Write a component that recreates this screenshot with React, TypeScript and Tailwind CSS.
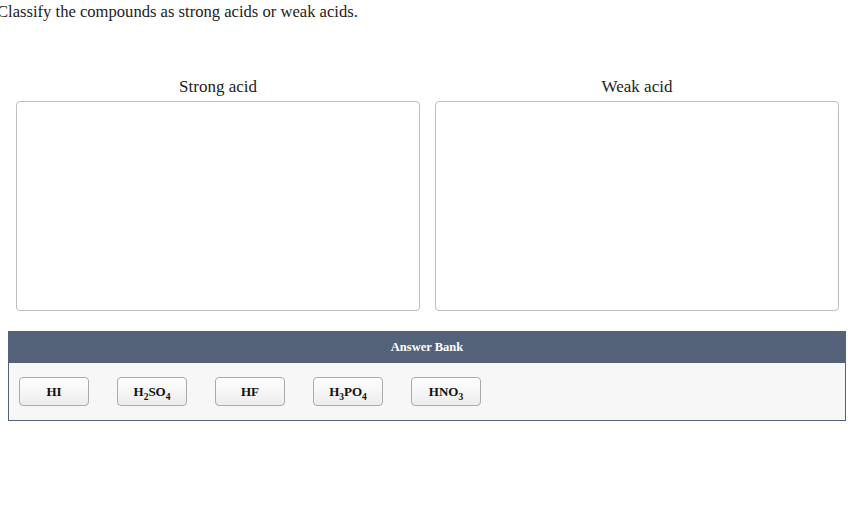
import type { ReactNode } from "react";

const sub = "text-[9.5px] align-[-2px]";

const items: ReactNode[] = [
  <>HI</>,
  <>
    H<sub className={sub}>2</sub>SO<sub className={sub}>4</sub>
  </>,
  <>HF</>,
  <>
    H<sub className={sub}>3</sub>PO<sub className={sub}>4</sub>
  </>,
  <>
    HNO<sub className={sub}>3</sub>
  </>,
];

function Bin({ label }: { label: string }) {
  return (
    <div className="flex w-[404px] flex-col">
      <div className="h-[24px] text-center text-[17px] leading-[20px] text-[#222]">{label}</div>
      <div className="h-[210px] rounded-[4px] border border-[#bdbdbd] bg-white" />
    </div>
  );
}

export default function App() {
  return (
    <div className="h-[517px] w-[848px] overflow-hidden bg-white font-['Liberation_Serif',serif] text-[#222]">
      <p className="-ml-[3px] pt-[2px] text-[16.6px] leading-[20px]">
        Classify the compounds as strong acids or weak acids.
      </p>
      <div className="mt-[55px] flex gap-[15px] pl-[16px]">
        <Bin label="Strong acid" />
        <Bin label="Weak acid" />
      </div>
      <div className="ml-[8px] mt-[20px] w-[838px] border border-[#536278]">
        <div className="flex h-[31px] items-center justify-center bg-[#536278] text-[12.5px] font-bold text-white">
          Answer Bank
        </div>
        <div className="flex h-[57px] gap-[28px] bg-[#f7f7f7] pl-[10px] pt-[14px]">
          {items.map((it, i) => (
            <div
              key={i}
              className="flex h-[29px] w-[70px] items-center justify-center rounded-[4px] border border-[#ababab] bg-gradient-to-b from-white to-[#ececec] text-[13px] font-bold leading-none text-[#111]"
            >
              <span>{it}</span>
            </div>
          ))}
        </div>
      </div>
    </div>
  );
}
